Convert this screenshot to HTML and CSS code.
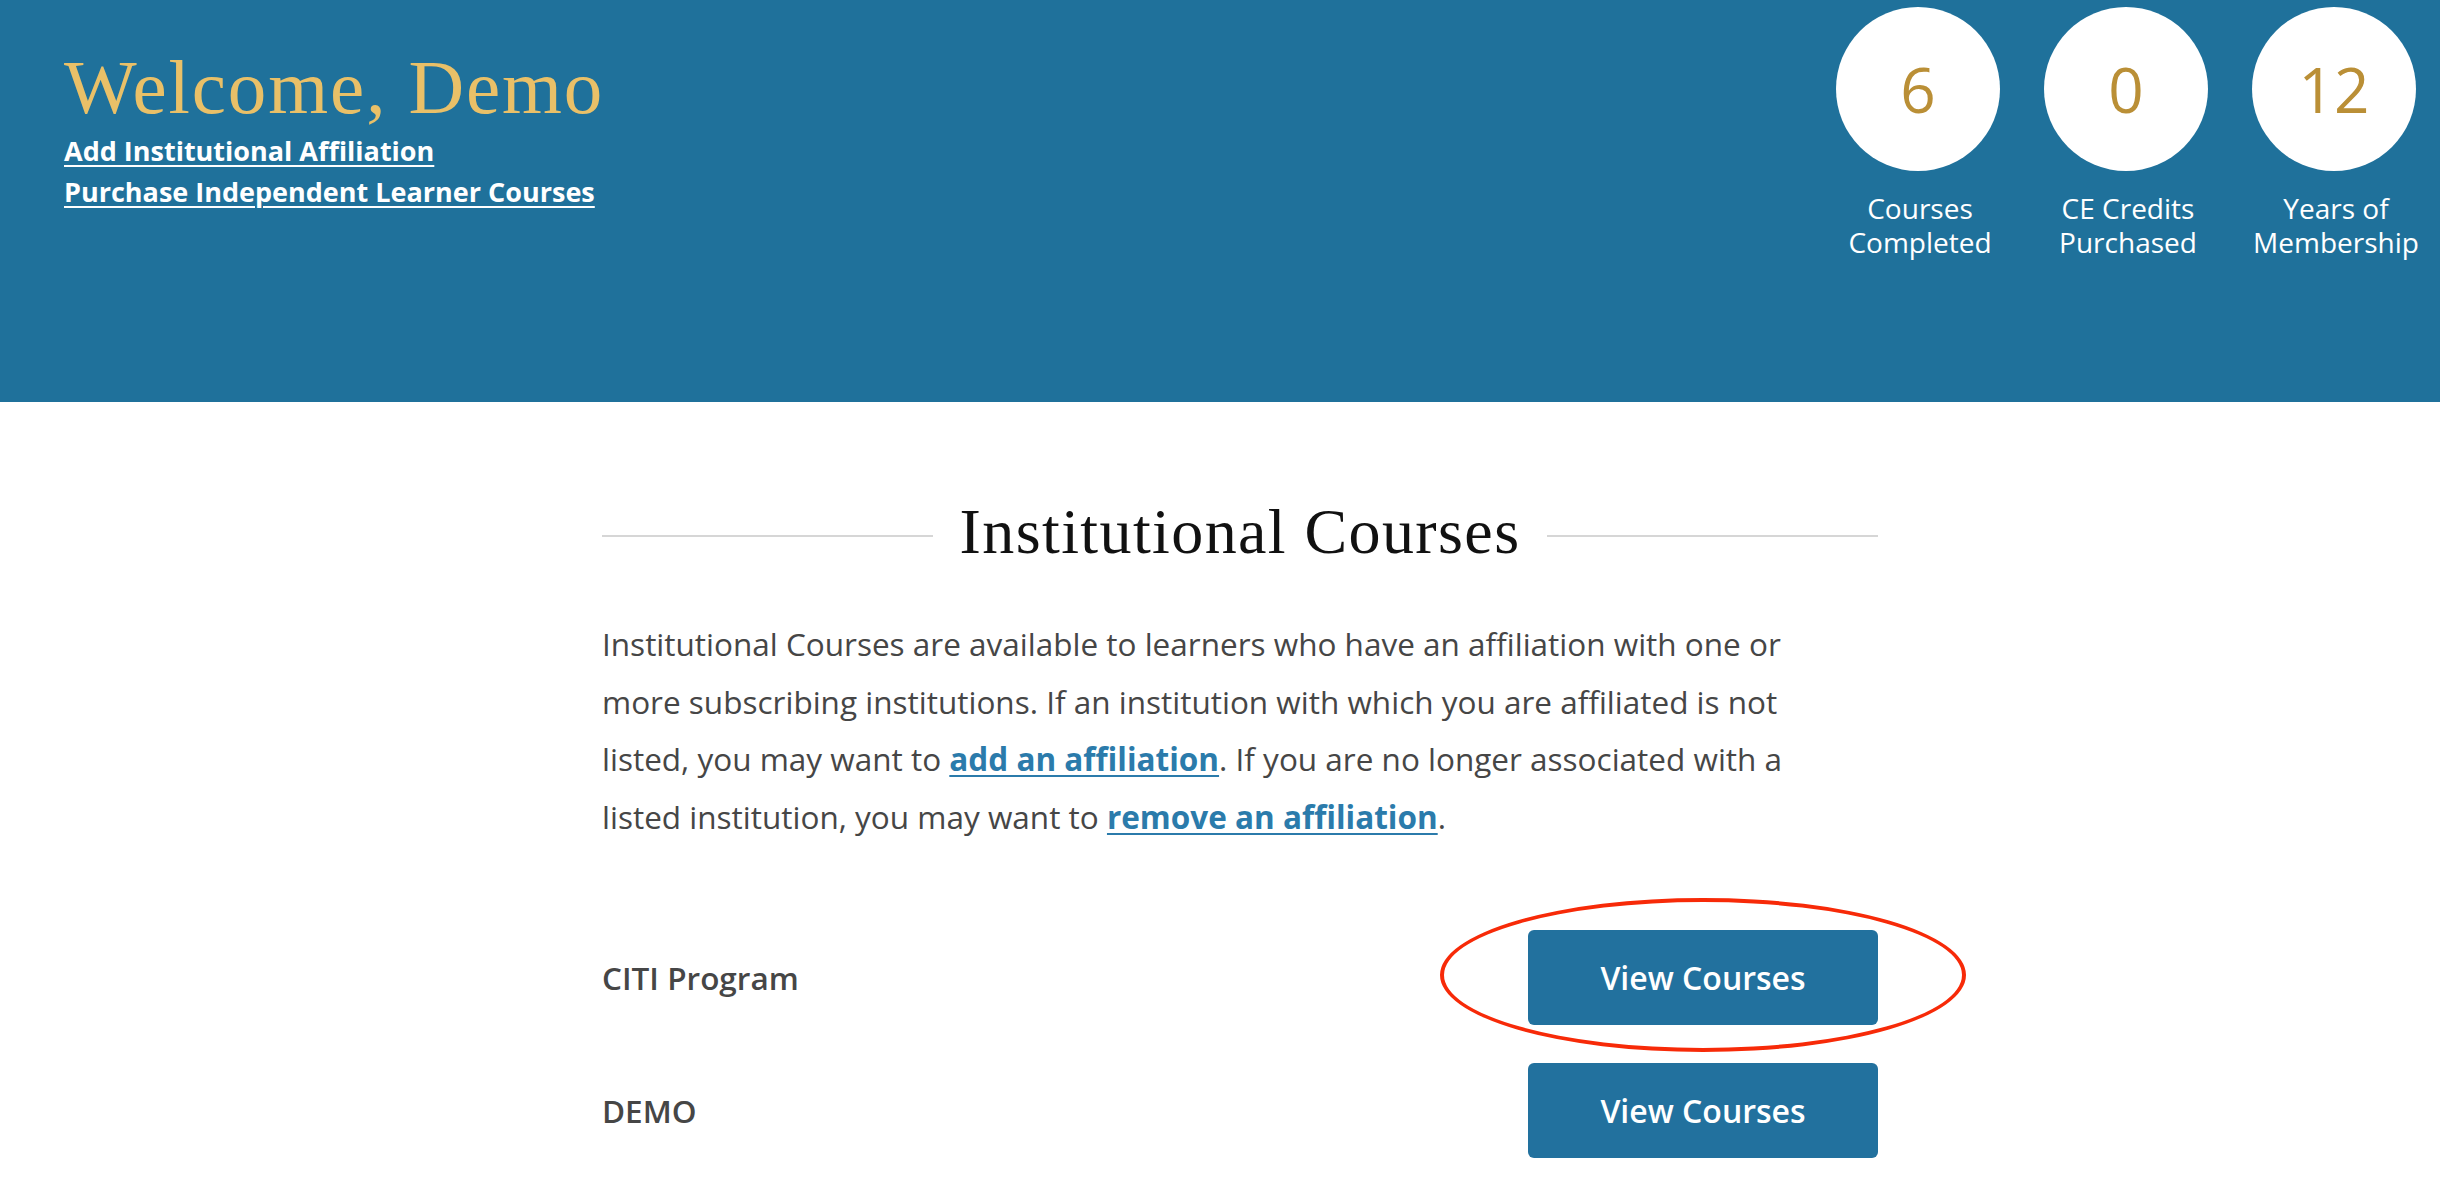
FILE: index.html
```html
<!DOCTYPE html>
<html lang="en">
<head>
<meta charset="utf-8">
<title>Dashboard</title>
<link rel="stylesheet" href="styles.css">
</head>
<body>
<header class="hero">
  <div class="hero-intro">
    <h1 class="welcome">Welcome, Demo</h1>
    <a class="hero-link" href="#">Add Institutional Affiliation</a>
    <a class="hero-link" href="#">Purchase Independent Learner Courses</a>
  </div>
  <div class="stats">
    <div class="stat">
      <div class="stat-circle">6</div>
      <div class="stat-label">Courses<br>Completed</div>
    </div>
    <div class="stat">
      <div class="stat-circle">0</div>
      <div class="stat-label">CE Credits<br>Purchased</div>
    </div>
    <div class="stat">
      <div class="stat-circle">12</div>
      <div class="stat-label">Years of<br>Membership</div>
    </div>
  </div>
</header>
<main class="main">
  <section class="courses">
    <div class="section-title">
      <span class="rule"></span>
      <h2 class="title-text">Institutional Courses</h2>
      <span class="rule"></span>
    </div>
    <p class="intro">Institutional Courses are available to learners who have an affiliation with one or more subscribing institutions. If an institution with which you are affiliated is not listed, you may want to <a class="text-link" href="#">add an affiliation</a>. If you are no longer associated with a listed institution, you may want to <a class="text-link" href="#">remove an affiliation</a>.</p>
    <div class="inst-list">
      <div class="inst-row">
        <span class="inst-name">CITI Program</span>
        <a class="btn btn-annotated" href="#">View Courses</a>
      </div>
      <div class="inst-row">
        <span class="inst-name">DEMO</span>
        <a class="btn" href="#">View Courses</a>
      </div>
    </div>
  </section>
</main>
</body>
</html>
```
FILE: styles.css
```css
html, body {
  margin: 0;
  padding: 0;
  background: #ffffff;
}
body {
  font-family: "Open Sans", "Noto Sans", sans-serif;
  color: #464646;
}
.hero {
  background: #1f719b;
  height: 402px;
  box-sizing: border-box;
  padding: 7px 24px 0 64px;
  display: flex;
  justify-content: space-between;
  align-items: flex-start;
}
.hero-intro {
  display: flex;
  flex-direction: column;
  align-items: flex-start;
}
.welcome {
  margin: 42px 0 5px 0;
  font-family: "Liberation Serif", "Times New Roman", serif;
  font-weight: normal;
  font-size: 77px;
  line-height: 76px;
  letter-spacing: 1.9px;
  color: #e9c068;
}
.hero-link {
  color: #ffffff;
  font-size: 27px;
  font-weight: 700;
  line-height: 41px;
  text-decoration: underline;
  text-underline-offset: 4px;
  text-decoration-thickness: 2px;
}
.stats {
  display: flex;
  gap: 44px;
}
.stat {
  width: 164px;
  display: flex;
  flex-direction: column;
  align-items: center;
}
.stat-circle {
  width: 164px;
  height: 164px;
  border-radius: 50%;
  background: #ffffff;
  color: #ba8f36;
  font-size: 62px;
  line-height: 1;
  display: flex;
  align-items: center;
  justify-content: center;
}
.stat-label {
  margin-top: 20px;
  color: #ffffff;
  font-size: 28px;
  line-height: 34px;
  text-align: center;
  white-space: nowrap;
  transform: translateX(2px);
}
.main {
  padding: 98px 0 0 40px;
}
.courses {
  width: 1276px;
  margin: 0 auto;
}
.section-title {
  display: flex;
  align-items: center;
  gap: 27px;
}
.rule {
  flex: 1;
  height: 2px;
  background: #d6d6d6;
  margin-top: 8px;
}
.title-text {
  margin: 0;
  font-family: "Liberation Serif", "Times New Roman", serif;
  font-weight: normal;
  font-size: 64px;
  line-height: 63px;
  letter-spacing: 1.4px;
  color: #111111;
}
.intro {
  margin: 52px 0 0 0;
  max-width: 1240px;
  font-size: 31.5px;
  line-height: 57.6px;
  color: #464646;
}
.text-link {
  color: #2b7bab;
  font-weight: 700;
  text-decoration: underline;
  text-underline-offset: 4px;
  text-decoration-thickness: 2px;
}
.inst-list {
  margin-top: 85px;
  display: flex;
  flex-direction: column;
  gap: 38px;
}
.inst-row {
  display: flex;
  justify-content: space-between;
  align-items: center;
}
.inst-name {
  font-size: 31.5px;
  font-weight: 600;
  color: #464646;
}
.btn {
  position: relative;
  width: 350px;
  height: 95px;
  border-radius: 6px;
  background: #22719e;
  color: #ffffff;
  font-size: 32px;
  font-weight: 600;
  text-decoration: none;
  display: flex;
  align-items: center;
  justify-content: center;
}
.btn-annotated::after {
  content: "";
  position: absolute;
  left: -88px;
  right: -88px;
  top: -32px;
  bottom: -27px;
  border: 4px solid #f72a08;
  border-radius: 50%;
  pointer-events: none;
}
```
